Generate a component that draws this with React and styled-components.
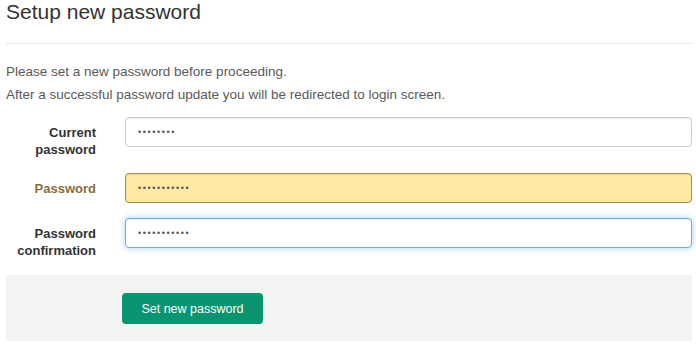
import React from "react";
import styled, { createGlobalStyle } from "styled-components";

const GlobalStyle = createGlobalStyle`
  body {
    margin: 0;
    background: #fff;
    font-family: "Liberation Sans", Arial, sans-serif;
  }
`;

const Page = styled.div`
  width: 686px;
  padding-left: 6px;
`;

const Title = styled.h1`
  margin: 0;
  font-size: 21px;
  line-height: 23px;
  font-weight: normal;
  color: #333;
`;

const Divider = styled.hr`
  margin: 20px 0 16px;
  border: 0;
  border-top: 1px solid #e9e9e9;
`;

const Intro = styled.div`
  font-size: 13.5px;
  line-height: 23px;
  color: #5a5a5a;
  margin-bottom: 11px;
`;

const Row = styled.div`
  display: grid;
  grid-template-columns: 90px 1fr;
  column-gap: 29px;
  align-items: start;
  margin-bottom: ${(p) => (p.$last ? "0" : "15px")};
`;

const Label = styled.label`
  padding-top: 7px;
  text-align: right;
  font-size: 13px;
  line-height: 17px;
  font-weight: bold;
  color: ${(p) => (p.$warning ? "#8a6d3b" : "#333")};
`;

const Input = styled.input`
  box-sizing: border-box;
  width: 100%;
  height: 30px;
  padding: 0 12px;
  border-radius: 4px;
  font-family: "Liberation Sans", Arial, sans-serif;
  font-size: 9px;
  letter-spacing: 1.6px;
  color: #555;
  outline: none;
  border: 1px solid
    ${(p) => (p.$warning ? "#a88b4f" : p.$focus ? "#66afe9" : "#ccc")};
  background: ${(p) => (p.$warning ? "#ffe8a1" : "#fff")};
  box-shadow: ${(p) =>
    p.$focus
      ? "inset 0 1px 1px rgba(0,0,0,.075), 0 0 6px rgba(102,175,233,.6)"
      : "inset 0 1px 1px rgba(0,0,0,.075)"};
`;

const Footer = styled.div`
  margin-top: 16px;
  background: #f3f3f3;
  padding: 18px 0 17px 116px;
`;

const Button = styled.button`
  height: 31px;
  width: 141px;
  padding: 0;
  border: 0;
  border-radius: 4px;
  background: #0a9471;
  color: #fff;
  font-family: "Liberation Sans", Arial, sans-serif;
  font-size: 12.5px;
  cursor: pointer;
`;

export default function App() {
  return (
    <Page>
      <GlobalStyle />
      <Title>Setup new password</Title>
      <Divider />
      <Intro>
        <div>Please set a new password before proceeding.</div>
        <div>After a successful password update you will be redirected to login screen.</div>
      </Intro>
      <form onSubmit={(e) => e.preventDefault()}>
        <Row>
          <Label>Current password</Label>
          <Input type="password" defaultValue="12345678" />
        </Row>
        <Row>
          <Label $warning>Password</Label>
          <Input type="password" $warning defaultValue="12345678901" />
        </Row>
        <Row $last>
          <Label>Password confirmation</Label>
          <Input type="password" $focus defaultValue="12345678901" autoFocus />
        </Row>
        <Footer>
          <Button type="submit">Set new password</Button>
        </Footer>
      </form>
    </Page>
  );
}
